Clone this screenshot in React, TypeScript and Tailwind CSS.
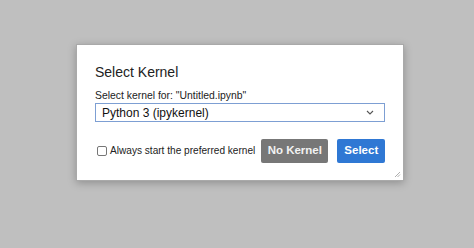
export default function App() {
  return (
    <main
      className="h-[248px] w-[474px] overflow-hidden bg-[#bfbfbf] pl-[76px] pt-[44px]"
      style={{ fontFamily: '"Liberation Sans", Arial, sans-serif' }}
    >
      <section className="relative h-[137px] w-[328px] border border-[#a9a9a9] bg-white pl-[18px] pr-[18px] pt-[18px] shadow-[0_2px_8px_rgba(0,0,0,0.25)]">
        <h1 className="text-[14px] leading-[18px] text-[#222]">Select Kernel</h1>
        <label className="mt-[8px] block text-[10.4px] leading-[13px] text-[#222]">
          Select kernel for: "Untitled.ipynb"
        </label>
        <div className="mt-[1px] flex h-[19px] w-[290px] items-center justify-between border border-[#7d9fd3] pl-[6px] pr-[10px]">
          <span className="text-[12px] text-[#111]">Python 3 (ipykernel)</span>
          <svg width="8" height="5" viewBox="0 0 8 5" fill="none">
            <path d="M1 1l3 3 3-3" stroke="#555" strokeWidth="1.1" />
          </svg>
        </div>
        <div className="mt-[17px] flex items-center whitespace-nowrap">
          <span className="ml-[2px] h-[10px] w-[10px] shrink-0 rounded-[2px] border border-[#777] bg-white" />
          <span className="ml-[3px] shrink-0 text-[10.1px] text-[#222]">Always start the preferred kernel</span>
          <button className="ml-[6px] h-[24px] w-[67px] shrink-0 rounded-[2px] bg-[#777] text-[11.5px] font-bold text-[#f2f2f2]">
            No Kernel
          </button>
          <button className="ml-[9px] h-[24px] w-[48px] shrink-0 rounded-[2px] bg-[#2f78d4] text-[11.5px] font-bold text-white">
            Select
          </button>
        </div>
        <svg className="absolute bottom-[2px] right-[2px]" width="7" height="7" viewBox="0 0 7 7">
          <path d="M6 1L1 6M6 3.5L3.5 6" stroke="#999" strokeWidth="0.8" />
        </svg>
      </section>
    </main>
  )
}
